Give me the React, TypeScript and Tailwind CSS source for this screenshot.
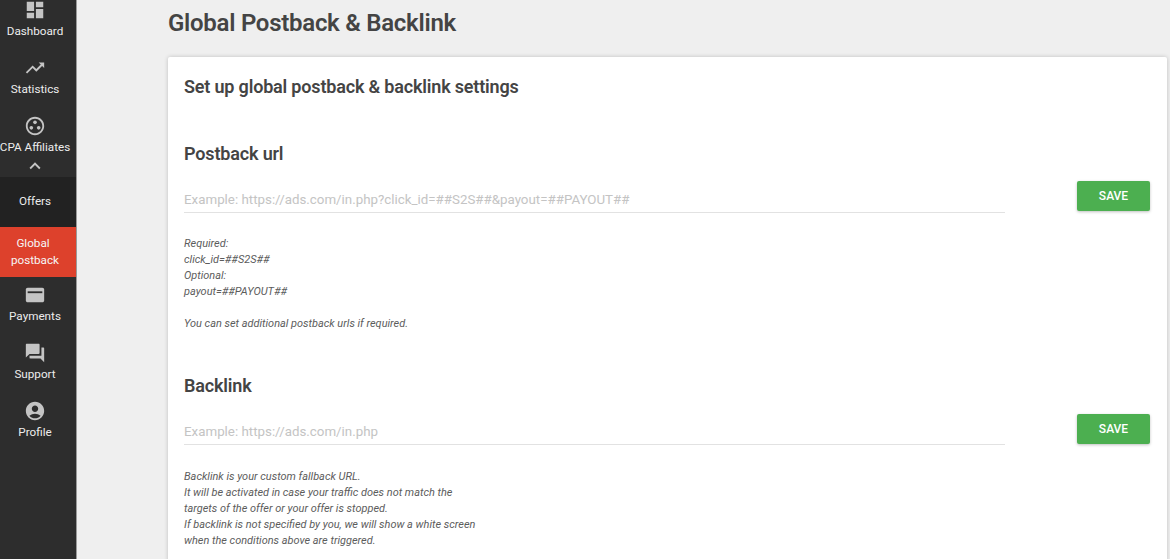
import React from 'react';
import {
  MdAccountCircle,
  MdDashboard,
  MdExpandLess,
  MdForum,
  MdOutlineGroupWork,
  MdTrendingUp,
} from 'react-icons/md';
import type { IconType } from 'react-icons';

const PaymentIcon: IconType = (props) => (
  <svg viewBox="0 0 24 24" fill="currentColor" {...props}>
    <path d="M20 4H4c-1.1 0-2 .9-2 2v12c0 1.1.9 2 2 2h16c1.1 0 2-.9 2-2V6c0-1.1-.9-2-2-2z" />
    <rect x="4" y="8" width="16" height="2" fill="#2d2d2d" />
  </svg>
);

const NavItem = ({ icon: Icon, label }: { icon: IconType; label: string }) => (
  <div className="flex h-[58px] flex-col items-center pr-[6px]">
    <Icon className="h-[22px] w-[22px] shrink-0 text-[#c4c4c4]" />
    <span className="text-[11.7px] leading-[20px] whitespace-nowrap text-[#ececec]">{label}</span>
  </div>
);

const SaveButton = () => (
  <button className="mb-[2px] h-[30px] w-[73px] rounded-[2px] bg-[#4caf50] text-[12px] font-medium text-white shadow-[0_1px_3px_rgba(0,0,0,0.25)]">
    SAVE
  </button>
);

const UrlField = ({ placeholder, raised }: { placeholder: string; raised?: boolean }) => (
  <div className="flex items-end justify-between pr-px">
    <div
      className={`w-[821px] border-b border-[#e2e2e2] pt-px text-[13.33px] leading-[24px] text-[#c4c4c4] ${raised ? 'mb-px' : ''}`}
    >
      {placeholder}
    </div>
    <SaveButton />
  </div>
);

const Hint = ({ lines }: { lines: string[] }) => (
  <div className="text-[10.95px] leading-[16px] text-[#5c5c5c] italic">
    {lines.map((line, i) => (
      <p key={i} className="min-h-[16px]">
        {line}
      </p>
    ))}
  </div>
);

export default function App() {
  return (
    <div className="flex h-[559px] overflow-hidden bg-[#efefef] font-['Roboto',sans-serif] text-[#444444]">
      <aside className="w-[77px] shrink-0 border-r border-[#9a9a9a] bg-[#2d2d2d]">
        <div className="-mt-px">
          <NavItem icon={MdDashboard} label="Dashboard" />
          <NavItem icon={MdTrendingUp} label="Statistics" />
          <div className="flex h-[62px] flex-col items-center pr-[6px]">
            <MdOutlineGroupWork className="h-[22px] w-[22px] shrink-0 text-[#c4c4c4]" />
            <span className="text-[11.7px] leading-[20px] whitespace-nowrap text-[#ececec]">CPA Affiliates</span>
            <MdExpandLess className="-mt-[2px] h-[22px] w-[22px] shrink-0 text-[#c4c4c4]" />
          </div>
          <div className="flex h-[50px] items-center justify-center bg-[#222222] pr-[6px] text-[11.7px] text-[#ececec]">
            Offers
          </div>
          <div className="flex h-[50px] items-center justify-center bg-[#dd412c] pr-[6px] text-center text-[11.7px] leading-[17px] text-[#f5f5f5]">
            <span>
              <span className="pr-1">Global</span>
              <br />
              postback
            </span>
          </div>
          <div className="pt-[7px]">
            <NavItem icon={PaymentIcon} label="Payments" />
            <NavItem icon={MdForum} label="Support" />
            <NavItem icon={MdAccountCircle} label="Profile" />
          </div>
        </div>
      </aside>
      <main className="min-w-0 flex-1 pr-[3px] pl-[91px]">
        <h1 className="h-[57px] pt-[7px] text-[24px] leading-[32px] font-semibold tracking-[-0.27px]">
          Global Postback &amp; Backlink
        </h1>
        <section className="rounded-[2px] bg-white px-4 pt-[18px] shadow-[0_0_4px_rgba(0,0,0,0.2)]">
          <h2 className="text-[18px] leading-[24px] font-semibold tracking-[-0.18px]">
            Set up global postback &amp; backlink settings
          </h2>
          <h3 className="mt-[43px] text-[18px] leading-[24px] font-semibold tracking-[-0.16px]">Postback url</h3>
          <div className="mt-[15px]">
            <UrlField placeholder="Example: https://ads.com/in.php?click_id=##S2S##&payout=##PAYOUT##" />
          </div>
          <div className="mt-[23px]">
            <Hint
              lines={[
                'Required:',
                'click_id=##S2S##',
                'Optional:',
                'payout=##PAYOUT##',
                '',
                'You can set additional postback urls if required.',
              ]}
            />
          </div>
          <h3 className="mt-[42px] text-[18px] leading-[24px] font-semibold tracking-[-0.16px]">Backlink</h3>
          <div className="mt-[16px]">
            <UrlField placeholder="Example: https://ads.com/in.php" raised />
          </div>
          <div className="mt-[23px]">
            <Hint
              lines={[
                'Backlink is your custom fallback URL.',
                'It will be activated in case your traffic does not match the',
                'targets of the offer or your offer is stopped.',
                'If backlink is not specified by you, we will show a white screen',
                'when the conditions above are triggered.',
              ]}
            />
          </div>
          <div className="h-10" />
        </section>
      </main>
    </div>
  );
}
